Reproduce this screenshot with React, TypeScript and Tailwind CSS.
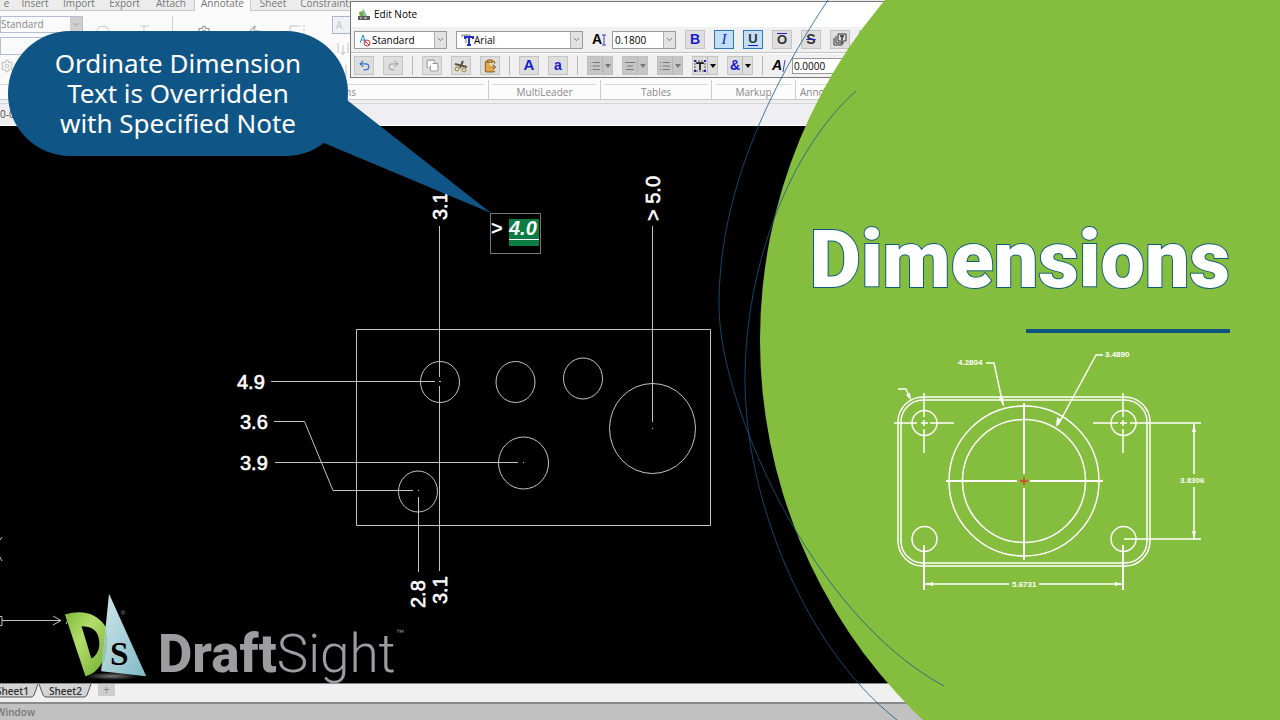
import type { ReactNode } from "react";
import {
  ChevronDown,
  ClipboardPaste,
  Copy,
  List,
  Redo2,
  Settings,
  TextAlignCenter,
  Undo2,
  Zap,
} from "lucide-react";

const ribbonTabs = [
  { name: "Home", width: "w-[13px]" },
  { name: "Insert", width: "w-[44px]" },
  { name: "Import", width: "w-[44px]" },
  { name: "Export", width: "w-[47px]" },
  { name: "Attach", width: "w-[46px]" },
  { name: "Annotate", width: "w-[57px]" },
  { name: "Sheet", width: "w-[44px]" },
  { name: "Constraints", width: "w-[64px]" },
];

const ribbonGroups = [
  { name: "MultiLeader", width: "w-[112px]" },
  { name: "Tables", width: "w-[111px]" },
  { name: "Markup", width: "w-[84px]" },
];

const ToolButton = ({
  label,
  active,
  children,
}: {
  label: string;
  active?: boolean;
  children: ReactNode;
}) => (
  <button
    type="button"
    aria-label={label}
    className={
      active
        ? "flex h-[19px] w-5 shrink-0 items-center justify-center border border-[#2d78b8] bg-[#c3dff5]"
        : "flex h-[19px] w-5 shrink-0 items-center justify-center border border-[#c4c4c4] bg-[#dedede]"
    }
  >
    {children}
  </button>
);

const SplitButton = ({
  label,
  disabled,
  children,
}: {
  label: string;
  disabled?: boolean;
  children: ReactNode;
}) => (
  <button
    type="button"
    aria-label={label}
    className={
      disabled
        ? "flex h-[19px] w-[26px] shrink-0 items-center border border-[#c0c0c0] bg-[#c6c6c6] text-[#777]"
        : "flex h-[19px] w-[26px] shrink-0 items-center border border-[#c4c4c4] bg-[#dedede] text-black"
    }
  >
    <span className="flex h-full flex-1 items-center justify-center border-r border-[#b4b4b4]">
      {children}
    </span>
    <svg viewBox="0 0 9 6" className="h-[6px] w-[9px]">
      <path d="M2 1h6L5 5z" fill="currentColor" />
    </svg>
  </button>
);

const Separator = () => <span className="h-[19px] w-px shrink-0 bg-[#b8b8b8]" />;

const Combo = ({
  label,
  value,
  box,
  pad,
  children,
}: {
  label: string;
  value: string;
  box: string;
  pad: string;
  children?: ReactNode;
}) => (
  <div className={`relative h-[18px] shrink-0 border border-[#9a9a9a] bg-white ${box}`}>
    <span className="absolute top-[1px] left-1">{children}</span>
    <select
      aria-label={label}
      className={`block h-4 w-full appearance-none bg-transparent text-[10px] leading-4 text-black ${pad}`}
    >
      <option>{value}</option>
    </select>
    <span className="pointer-events-none absolute inset-y-0 right-0 flex w-3 items-center justify-center border-l border-[#b0b0b0] bg-[#e2e2e2]">
      <ChevronDown className="size-[9px] text-[#555]" />
    </span>
  </div>
);

const Ribbon = () => (
  <header className="relative flex h-[126px] shrink-0 flex-col overflow-hidden bg-[#fafafa] text-[10px] text-[#777]">
    <nav className="flex h-[11px] shrink-0 border-b border-[#c8c8c8] bg-[#ececec]">
      {ribbonTabs.map((tab) => (
        <a
          href="#"
          key={tab.name}
          className={
            tab.name === "Annotate"
              ? `flex h-[11px] shrink-0 items-center justify-center border-x border-[#c8c8c8] bg-[#fafafa] leading-3 ${tab.width}`
              : `flex h-[11px] shrink-0 items-center justify-center leading-3 ${tab.width}`
          }
        >
          <span className="relative bottom-[3px]">
            {tab.name === "Home" ? "e" : tab.name}
          </span>
        </a>
      ))}
    </nav>
    <div className="flex flex-1 gap-[13px] pt-[5px] text-[#c4c4c4]">
      <div className="w-[83px] shrink-0">
        <div className="flex h-[17px] border border-[#b3bed2] leading-[15px] text-[#888]">
          <span className="flex-1">Standard</span>
          <span className="flex w-3 items-center justify-center bg-[#cfcfcf]">
            <ChevronDown className="size-[9px]" />
          </span>
        </div>
        <div className="mt-1 h-[18px] border border-[#b3bed2]" />
        <Settings className="mt-1 size-[14px]" />
      </div>
      <div className="flex h-[17px] w-[223px] shrink-0 items-end">
        <svg viewBox="0 0 14 14" className="-mb-[6px] size-[14px]" fill="none" stroke="currentColor">
          <circle cx="7" cy="7" r="6" />
        </svg>
        <svg
          viewBox="0 0 14 14"
          className="-mb-[6px] ml-7 size-[14px]"
          fill="none"
          stroke="currentColor"
        >
          <path d="M2 1h9M6 1v10" />
        </svg>
        <span className="ml-5 h-[17px] w-px bg-[#cfcfcf]" />
        <Settings className="-mb-[6px] ml-6 size-[14px] text-[#999]" />
        <Zap className="-mb-[6px] ml-9 size-[14px] text-[#aaa]" />
        <svg
          viewBox="0 0 18 14"
          className="-mb-[6px] ml-7 h-[14px] w-[18px]"
          fill="none"
          stroke="currentColor"
        >
          <path d="M1 12V1h10" />
          <path d="M15 0v14" strokeDasharray="2 2" />
        </svg>
      </div>
      <div className="flex w-5 shrink-0 flex-col gap-2">
        <span className="h-[18px] border border-[#a9b6cc] bg-[#eef1f6] pl-[3px] leading-4">A</span>
        <svg viewBox="0 0 14 14" className="ml-1 size-[14px]" fill="none" stroke="currentColor">
          <path d="M2 1v10M12 1v10M7 3v9M5 10l2 3 2-3" />
        </svg>
        <svg viewBox="0 0 14 14" className="ml-1 size-[14px]" fill="none" stroke="currentColor">
          <path d="M10 1v12M2 4v6" />
        </svg>
      </div>
    </div>
    <div className="flex h-[19px] shrink-0 bg-[#fcfcfc] text-[#888]">
      <div className="w-[489px] shrink-0 border-r border-[#ccc] pr-1">
        <div className="mt-1 border-t border-[#d8d8d8] pl-[345px] leading-[15px]">ns</div>
      </div>
      {ribbonGroups.map((group) => (
        <div key={group.name} className={`shrink-0 border-r border-[#ccc] px-1 ${group.width}`}>
          <div className="mt-1 border-t border-[#d8d8d8] text-center leading-[15px]">
            {group.name}
          </div>
        </div>
      ))}
      <div className="flex-1 px-1">
        <div className="mt-1 border-t border-[#d8d8d8] leading-[15px]">Annotation</div>
      </div>
    </div>
    <div className="h-[27px] shrink-0 border-t border-[#c9c9c9] bg-[#efeff3] pt-[3px] text-[#444]">
      <div className="h-6 border-t border-b-2 border-t-[#d5d5d5] border-b-white leading-5">
        0-04
      </div>
    </div>
  </header>
);

const EditNoteWindow = () => (
  <section className="absolute top-px right-0 left-[350px] overflow-hidden border border-[#777] bg-[#f0f0f0] text-[10px] text-black">
    <h2 className="flex h-[25px] items-center gap-1 bg-white pl-[7px]">
      <svg viewBox="0 0 12 13" className="h-[13px] w-3">
        <path d="M5 0 9 8H4z" fill="#8fb9a0" />
        <path d="M1 4 5 3v6H2z" fill="#6faa45" />
        <path d="M0 8h12v4H0z" fill="#555d55" />
        <path d="M2 10h2M6 10h3" stroke="#eee" />
      </svg>
      Edit Note
    </h2>
    <div className="flex h-[26px] items-center gap-[9px] border-b border-[#c2c2c2] pl-[3px]">
      <Combo label="Text style" value="Standard" box="w-[93px]" pad="pl-[17px]">
        <svg viewBox="0 0 12 14" className="h-[14px] w-3" fill="none">
          <path d="M1 10 4 2l3 8M2 7h4" stroke="#1c8fd6" />
          <circle cx="8" cy="10" r="3" stroke="#d33" />
          <path d="m6 8 4 4" stroke="#d33" />
        </svg>
      </Combo>
      <Combo label="Font" value="Arial" box="w-[127px]" pad="pl-[17px]">
        <svg viewBox="0 0 14 14" className="h-[14px] w-[14px]" fill="none">
          <path d="M1 4V2h8v2M5 2v8" stroke="#777" />
          <path d="M4 6V4h8v2M8 4v8M6 12h4" stroke="#1f2fc4" strokeWidth="2" />
        </svg>
      </Combo>
      <span className="flex w-[11px] items-center font-['Liberation_Sans'] text-[14px] font-bold">
        A
        <svg viewBox="0 0 4 12" className="h-3 w-1 shrink-0">
          <path d="M0 1h4M2 1v10M0 11h4" stroke="#3b3bd0" />
        </svg>
      </span>
      <Combo label="Text height" value="0.1800" box="w-16" pad="pl-[2px]" />
      <ToolButton label="Bold">
        <b className="font-['Liberation_Sans'] text-[14px] text-[#1a1ad0]">B</b>
      </ToolButton>
      <ToolButton label="Italic" active>
        <i className="font-['Liberation_Serif'] text-[15px] text-[#1a1ad0]">I</i>
      </ToolButton>
      <ToolButton label="Underline" active>
        <span className="border-b border-[#1a1ad0] font-['Liberation_Sans'] text-[13px] leading-3 font-bold text-[#333]">
          U
        </span>
      </ToolButton>
      <ToolButton label="Overline">
        <span className="border-t border-[#1a1ad0] font-['Liberation_Sans'] text-[13px] leading-3 font-bold text-[#333]">
          O
        </span>
      </ToolButton>
      <ToolButton label="Strikethrough">
        <b className="font-['Liberation_Sans'] text-[14px] text-[#333] line-through decoration-[#1a1ad0]">
          S
        </b>
      </ToolButton>
      <ToolButton label="Background mask">
        <svg viewBox="0 0 14 13" className="h-[13px] w-[14px]" fill="none" stroke="#333">
          <path d="M5 1h8v7H5zM3 3v7h8M1 5v7h8V8" />
          <path d="M7 3h4M9 3v4" strokeWidth="1.5" />
        </svg>
      </ToolButton>
      <ToolButton label="Insert field">#</ToolButton>
    </div>
    <div className="flex h-6 items-center gap-[9px] border-t border-white pl-[3px]">
      <ToolButton label="Undo">
        <Undo2 className="size-[13px] text-[#2a73cf]" />
      </ToolButton>
      <ToolButton label="Redo">
        <Redo2 className="size-[13px] text-[#aaa]" />
      </ToolButton>
      <Separator />
      <ToolButton label="Copy">
        <Copy className="size-[13px] fill-white text-[#999]" />
      </ToolButton>
      <ToolButton label="Cut">
        <svg viewBox="0 0 16 14" className="h-[14px] w-4" fill="none" stroke="#5d5644">
          <path d="M2 5 14 8M10 2 7 9" strokeWidth="2" />
          <circle cx="4" cy="10" r="2" stroke="#a37c2c" />
          <circle cx="11" cy="11" r="2" stroke="#a37c2c" />
        </svg>
      </ToolButton>
      <ToolButton label="Paste">
        <ClipboardPaste className="size-[14px] fill-[#e0a848] text-[#94672a]" />
      </ToolButton>
      <Separator />
      <ToolButton label="Uppercase">
        <span className="font-['Liberation_Sans'] text-[15px] font-bold text-[#1a1ad0]">A</span>
      </ToolButton>
      <ToolButton label="Lowercase">
        <span className="font-['Liberation_Sans'] text-[14px] font-bold text-[#1a1ad0]">a</span>
      </ToolButton>
      <Separator />
      <SplitButton label="Line spacing" disabled>
        <List className="size-3" />
      </SplitButton>
      <SplitButton label="Justification" disabled>
        <TextAlignCenter className="size-3" />
      </SplitButton>
      <SplitButton label="Bullets" disabled>
        <List className="size-3" />
      </SplitButton>
      <SplitButton label="Text frame">
        <svg viewBox="0 0 14 14" className="size-[14px]" fill="none">
          <path d="M2 2h10v10H2z" stroke="#555" strokeDasharray="2 1" />
          <path d="M4 5V4h6v1M7 4v7" stroke="#000" strokeWidth="1.5" />
          <path d="M1 1h2v2H1zM11 1h2v2h-2zM1 11h2v2H1zM11 11h2v2h-2z" fill="#1a1ad0" />
        </svg>
      </SplitButton>
      <SplitButton label="Symbol">
        <b className="font-['Liberation_Sans'] text-[14px] text-[#1a1ad0]">&amp;</b>
      </SplitButton>
      <Separator />
      <span className="flex w-[11px] items-center font-['Liberation_Sans'] text-[14px] font-bold italic">
        A
        <svg viewBox="0 0 4 12" className="h-3 w-1 shrink-0">
          <path d="M3 0 1 12" stroke="#3b3bd0" />
        </svg>
      </span>
      <input
        aria-label="Oblique angle"
        defaultValue="0.0000"
        className="h-4 w-16 border border-[#999] bg-white px-px"
      />
    </div>
  </section>
);

const CadCanvas = () => (
  <div className="relative flex-1 overflow-hidden bg-black">
    {/* drawing units start under the ribbon, so the view box begins at 126 */}
    <svg viewBox="0 126 760 557" className="h-[557px] w-[760px]" fill="none" stroke="#c4c4c4">
      <path d="M356.5 329.5h354v196h-354z" />
      <ellipse cx="440" cy="382" rx="19.5" ry="20.5" />
      <ellipse cx="515.5" cy="382" rx="19.5" ry="20.5" />
      <ellipse cx="583" cy="378.5" rx="19.5" ry="20.5" />
      <ellipse cx="652.5" cy="428.5" rx="43" ry="45" />
      <ellipse cx="523.5" cy="463" rx="25" ry="26" />
      <ellipse cx="418" cy="491.5" rx="19.5" ry="20.5" />
      <path d="M439.5 226v151M439.5 386v185M652.5 226v196M418.5 497v75" />
      <path d="M271 381.5h164M275 462.5h243M274 421.5h30.5l28.5 69h80" />
      <path d="M439 381.5h2M652 428.5h1M523 462.5h1M418 490.5h1" />
      <path d="M-1 616.5h3v9h-3M2 620.5h59M53 616l8 4.5-8 4.5M66 624l4-8M0 540l2-3M0 557l2 4" />
      <g
        fill="#fff"
        stroke="#fff"
        strokeWidth="0.6"
        className="font-['Liberation_Sans'] text-[20px]"
      >
        <text x="237" y="389">4.9</text>
        <text x="240" y="429">3.6</text>
        <text x="240" y="470">3.9</text>
        <text transform="translate(447 220) rotate(-90)">3.1</text>
        <text transform="translate(660 221) rotate(-90)">&gt; 5.0</text>
        <text transform="translate(425 608) rotate(-90)">2.8</text>
        <text transform="translate(447 604) rotate(-90)">3.1</text>
      </g>
    </svg>
    <div
      role="textbox"
      aria-label="Dimension note"
      contentEditable
      suppressContentEditableWarning
      className="absolute top-[87px] left-[490px] flex h-[41px] w-[51px] items-start justify-between border border-[#777] pt-[5px] pr-px font-['Liberation_Sans'] text-[20px] leading-[18px] font-bold text-white"
    >
      &gt;
      <i className="h-[27px] w-[30px] bg-[#0b7d43]">
        <span className="block border-b border-white pb-[2px]">4.0</span>
      </i>
    </div>
  </div>
);

const SheetTabs = () => (
  <footer className="shrink-0 text-[10px] text-[#333]">
    <div className="flex h-[19px] items-start border-t border-[#888] bg-[#f0f0f0]">
      {["Sheet1", "Sheet2"].map((sheet) => (
        <button
          type="button"
          key={sheet}
          className={
            sheet === "Sheet1"
              ? "relative -ml-[14px] h-[14px] w-[53px] leading-[13px]"
              : "relative h-[14px] w-[53px] leading-[13px]"
          }
        >
          <svg viewBox="0 0 53 14" className="absolute inset-0 h-full w-full">
            <path d="M0 0 4 11q1 2 3 2h38q2 0 3-2l4-11" fill="#d4d4d4" stroke="#555" />
          </svg>
          <span className="relative font-semibold">{sheet}</span>
        </button>
      ))}
      <button
        type="button"
        aria-label="New sheet"
        className="ml-[6px] flex h-3 w-[17px] items-center justify-center bg-[#cdcdcd] text-[12px] leading-3 text-[#888]"
      >
        +
      </button>
    </div>
    <div className="h-[18px] border-t-2 border-[#8a8a8a] bg-[#c1c1c1] leading-4 font-semibold text-[#777]">
      <span className="-ml-1">Window</span>
    </div>
  </footer>
);

const Callout = () => (
  <>
    <svg viewBox="320 95 172 120" className="absolute top-[95px] left-[320px] h-[120px] w-[172px]">
      <path d="M347 100 491 213 324 143 320 100z" fill="#0f5687" />
    </svg>
    <p className="absolute top-[31px] left-[8px] w-[340px] rounded-[62px] bg-[#0f5687] pt-[17px] pb-[18px] text-center font-['Noto_Sans'] text-[26px] leading-[30px] text-white">
      Ordinate Dimension
      <br />
      Text is Overridden
      <br />
      with Specified Note
    </p>
  </>
);

const Logo = () => (
  <div className="absolute bottom-[36px] left-[60px] flex items-end text-[#9d9ca1]">
    <svg viewBox="60 588 100 96" className="h-24 w-[98px] shrink-0">
      <defs>
        <linearGradient id="leaf" x1="0" y1="0" x2="1" y2="1">
          <stop offset="0" stopColor="#7cbb35" />
          <stop offset="0.4" stopColor="#b5dc6d" />
          <stop offset="1" stopColor="#6fae2e" />
        </linearGradient>
        <linearGradient id="sail" x1="0" y1="0" x2="1" y2="1">
          <stop offset="0" stopColor="#d3e8ee" />
          <stop offset="1" stopColor="#7fb9c4" />
        </linearGradient>
        <radialGradient id="floor">
          <stop offset="0" stopColor="#777" />
          <stop offset="1" stopColor="#000" />
        </radialGradient>
      </defs>
      <ellipse cx="113" cy="677" rx="28" ry="4" fill="url(#floor)" />
      <path
        d="M65 614Q93 606 107 627C111 645 106 672 86 677ZM82 626 92 659C98 656 101 648 100 641 99 630 92 626 82 626Z"
        fill="url(#leaf)"
        fillRule="evenodd"
      />
      <path d="M110 593 148 677 102 672Z" fill="url(#sail)" />
      <path d="M107 627Q111 648 102 672Z" fill="#8cc19c" opacity="0.7" />
      <text x="111" y="666" fill="#000" className="font-['Liberation_Serif'] text-[34px] font-bold">
        S
      </text>
      <text x="122" y="615" fill="#999" className="font-['Liberation_Sans'] text-[6px]">
        ®
      </text>
    </svg>
    <span className="flex items-start font-['Roboto'] text-[53px] leading-[60px]">
      <span className="font-extrabold">Draft</span>
      <span className="font-light">Sight</span>
      <span className="font-['Liberation_Sans'] text-[8px] leading-[18px]">™</span>
    </span>
  </div>
);

const Flange = () => (
  <svg
    viewBox="890 345 330 250"
    className="h-[250px] w-[330px]"
    fill="none"
    stroke="#fff"
    strokeWidth="1.5"
  >
    <rect x="898" y="397" width="252" height="169" rx="25" />
    <rect x="901" y="400" width="246" height="163" rx="22" />
    <circle cx="1024" cy="481" r="75" />
    <circle cx="1024" cy="481" r="61.5" />
    <circle cx="924.5" cy="423" r="12.5" />
    <circle cx="1123.5" cy="423" r="12.5" />
    <circle cx="924.5" cy="539" r="12.5" />
    <circle cx="1123.5" cy="539" r="12.5" />
    <path d="M946 481h71M1030 481h73M1024 403v71M1024 488v72" strokeWidth="2" />
    <path d="M894 423h23M921 423h7M930 423h24M924 393v24M924 420v6M924 429v24" />
    <path d="M1093 423h25M1120 423h7M1130 423h71M1123 393v24M1123 420v6M1123 429v24" />
    <path d="M1124 539h77M1194 424v50M1194 487v52M925 584h84M1039 584h84" />
    <path d="M924 545v45M1123 545v45" strokeWidth="2" />
    <path d="M898 389h8l4 9M986 363h8l9 42M1103 355h-7l-38 70" />
    <g fill="#fff" stroke="none">
      <path d="m1004 407-5-9 4-1zM1056 427l1-10 4 3zM911 400l-5-5 4-2z" />
      <path d="m1194 424 2 8h-4zM1194 539l2-8h-4zM925 584l8-2v4zM1123 584l-8-2v4z" />
    </g>
    <path d="M1020 481h8M1024 477v8" stroke="#d0442a" />
    <g fill="#fff" stroke="none" className="font-['Liberation_Sans'] text-[8px] font-bold">
      <text x="958" y="365">4.2804</text>
      <text x="1105" y="357">3.4890</text>
      <text x="1180" y="483">3.8306</text>
      <text x="1012" y="587">5.6731</text>
    </g>
  </svg>
);

const TitlePanel = () => (
  <aside className="absolute inset-y-0 right-0 w-[562px]">
    <svg
      viewBox="718 0 562 720"
      preserveAspectRatio="xMinYMin slice"
      className="absolute inset-0 h-full w-full"
      fill="none"
    >
      <circle cx="1285" cy="340" r="525" fill="#85bd3e" />
      <g stroke="#145a8a" strokeWidth="0.8">
        <path d="M828 0C758 105 719 205 719 305S812 615 944 686" />
        <path d="M856 91C790 150 745 265 745 380S802 645 897 720" />
      </g>
    </svg>
    <div className="relative flex flex-col items-end pt-[213px] pr-[50px]">
      <h1 className="font-['Roboto'] text-[79px] leading-[94px] font-black text-white [paint-order:stroke_fill] [-webkit-text-stroke:2px_#0f5b7c]">
        Dimensions
      </h1>
      <hr className="mt-[22px] h-1 w-[204px] border-0 bg-[#0e5680]" />
      <div className="mt-3 mr-[10px]">
        <Flange />
      </div>
    </div>
  </aside>
);

export default function App() {
  return (
    <main className="relative flex h-screen flex-col overflow-hidden bg-black font-['Open_Sans',sans-serif]">
      <Ribbon />
      <CadCanvas />
      <SheetTabs />
      <EditNoteWindow />
      <Callout />
      <Logo />
      <TitlePanel />
    </main>
  );
}
